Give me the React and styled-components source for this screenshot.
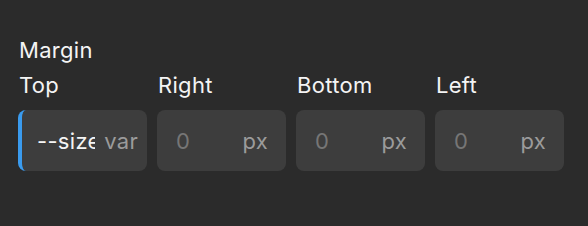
import React from 'react';
import styled, { createGlobalStyle } from 'styled-components';

const GlobalStyle = createGlobalStyle`
  html, body {
    margin: 0;
    padding: 0;
    background: #2b2b2b;
  }
  body {
    font-family: Inter, "Noto Sans", sans-serif;
    -webkit-font-smoothing: antialiased;
  }
`;

const Panel = styled.section`
  width: 588px;
  height: 226px;
  box-sizing: border-box;
  padding: 37px 18px 0 19px;
  background: #2b2b2b;
  color: #f4f4f4;
`;

const Heading = styled.div`
  font-size: 22px;
  line-height: 26px;
  letter-spacing: 0.3px;
  margin-bottom: 9px;
`;

const Grid = styled.div`
  display: grid;
  grid-template-columns: repeat(4, 129px);
  column-gap: 10px;
  margin-left: -1px;
`;

const Side = styled.div`
  display: flex;
  flex-direction: column;
`;

const Label = styled.label`
  font-size: 22px;
  line-height: 26px;
  letter-spacing: 0.3px;
  padding-left: 1px;
  margin-bottom: 12px;
`;

const Field = styled.div`
  display: flex;
  align-items: center;
  height: 61px;
  box-sizing: border-box;
  background: #3d3d3d;
  border-radius: 8px;
  border-left: ${(p) => (p.$active ? '4px solid #3a9bee' : 'none')};
  padding: ${(p) => (p.$active ? '0 9px 0 15px' : '0 18px 0 19px')};
  font-size: 22px;
  letter-spacing: 0.3px;
`;

const Value = styled.span`
  flex: 1;
  min-width: 0;
  overflow: hidden;
  white-space: nowrap;
  color: ${(p) => (p.$empty ? '#767676' : '#f4f4f4')};
`;

const Unit = styled.span`
  margin-left: 9px;
  color: #9b9b9b;
`;

const sides = [
  { name: 'Top', value: '--size', unit: 'var', active: true },
  { name: 'Right', value: '0', unit: 'px' },
  { name: 'Bottom', value: '0', unit: 'px' },
  { name: 'Left', value: '0', unit: 'px' },
];

const App = () => {
  return (
    <>
      <GlobalStyle />
      <Panel>
        <Heading>Margin</Heading>
        <Grid>
          {sides.map((s) => (
            <Side key={s.name}>
              <Label>{s.name}</Label>
              <Field $active={s.active}>
                <Value $empty={!s.active}>{s.value}</Value>
                <Unit>{s.unit}</Unit>
              </Field>
            </Side>
          ))}
        </Grid>
      </Panel>
    </>
  );
};

export default App;
